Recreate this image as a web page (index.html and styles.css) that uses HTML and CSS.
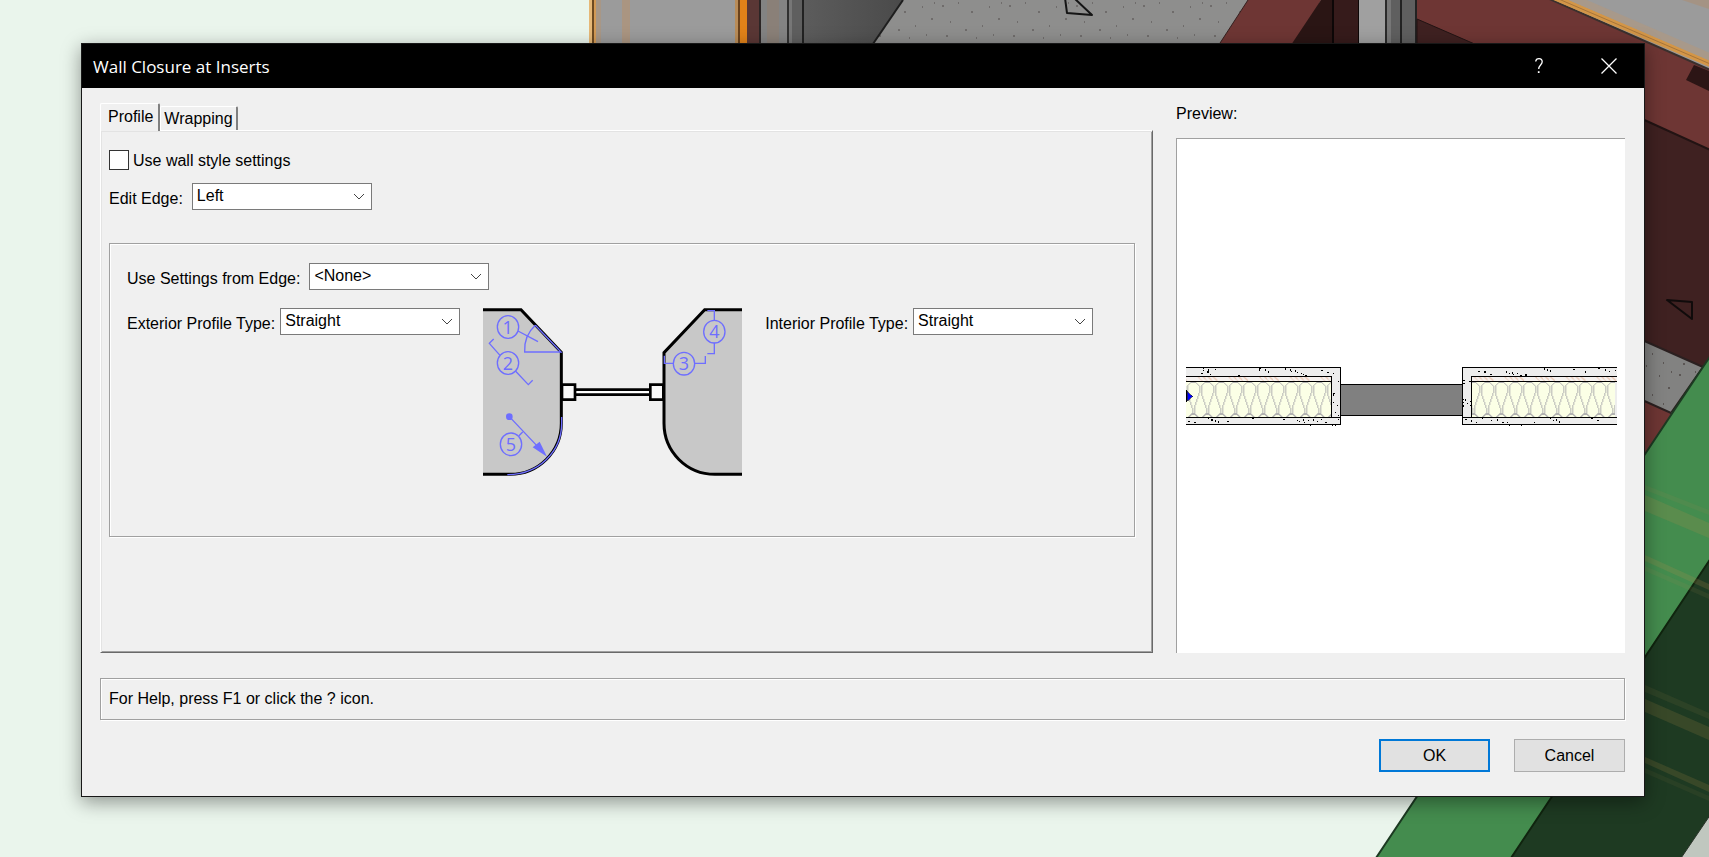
FILE: index.html
```html
<!DOCTYPE html>
<html lang="en">
<head>
<meta charset="utf-8">
<title>Wall Closure at Inserts</title>
<link rel="stylesheet" href="styles.css">
</head>
<body>
<svg class="scene" viewBox="0 0 1709 857" preserveAspectRatio="xMaxYMin slice" aria-hidden="true">
  <defs>
    <linearGradient id="soffit" x1="0" y1="0" x2="1" y2="0">
      <stop offset="0" stop-color="#5c5c5c"/><stop offset="1" stop-color="#484848"/>
    </linearGradient>
    <pattern id="grit" width="67" height="41" patternUnits="userSpaceOnUse">
      <path d="M4 6h2M20 3h1M33 12h2M51 7h1M60 19h2M12 22h1M27 30h2M44 26h1M8 36h2M55 35h1M38 38h1M63 3h1" stroke="#5b5654" stroke-width="2"/>
    </pattern>
  </defs>
  <!-- roof and walls above the dialog -->
  <rect x="589" width="1120" height="60" fill="#9b9b9b"/>
  <rect x="589" width="3" height="60" fill="#e6b877"/>
  <rect x="592" width="2" height="60" fill="#6d4a22"/>
  <rect x="594" width="2" height="60" fill="#d39a55"/>
  <rect x="596" width="5" height="60" fill="#a89786"/>
  <rect x="622" width="8" height="60" fill="#aa9581"/>
  <rect x="735" width="3" height="60" fill="#b98c58"/>
  <rect x="738" width="2" height="60" fill="#6a421c"/>
  <rect x="740" width="7" height="60" fill="#e28219"/>
  <rect x="747" width="13" height="60" fill="#5a3735"/>
  <rect x="759" width="2" height="60" fill="#2b2525"/>
  <rect x="761" width="26" height="60" fill="#838383"/>
  <rect x="767" width="12" height="60" fill="#8a8078"/>
  <rect x="787" width="2" height="60" fill="#303030"/>
  <rect x="789" width="3" height="60" fill="#777"/>
  <rect x="792" width="10" height="60" fill="#5f5f5f"/>
  <rect x="802" width="2" height="60" fill="#222"/>
  <rect x="804" width="110" height="60" fill="url(#soffit)"/>
  <path d="M903 0L862 60H1209L1248 0z" fill="#8e8e8d"/>
  <path d="M903 0L862 60H1209L1248 0z" fill="url(#grit)" opacity=".6"/>
  <path d="M903 0L862 60" stroke="#1e1e1e" stroke-width="2"/>
  <path d="M1065 -2L1067 13L1092 15L1074 -2" fill="none" stroke="#151515" stroke-width="2" stroke-linejoin="round"/>
  <path d="M1248 0L1209 60H1290L1321 0z" fill="#6e3634"/>
  <path d="M1248 0L1209 60" stroke="#35201f" stroke-width="1"/>
  <path d="M1321 0L1281 60H1333V0z" fill="#2a1514"/>
  <rect x="1332" width="2" height="60" fill="#0d0707"/>
  <rect x="1334" width="24" height="60" fill="#361b1b"/>
  <rect x="1358" width="1" height="60" fill="#0d0707"/>
  <rect x="1359" width="26" height="60" fill="#a0a0a0"/>
  <rect x="1385" width="2" height="60" fill="#2a2a2a"/>
  <rect x="1387" width="4" height="60" fill="#777"/>
  <rect x="1391" width="25" height="60" fill="#5f5f5f"/>
  <rect x="1400" width="2" height="60" fill="#222"/>
  <rect x="1415" width="2" height="60" fill="#222"/>
  <path d="M1417 0H1709V400L1640 470V60H1417z" fill="#6e3634"/>
  <path d="M1417 19L1500 55V60H1417z" fill="#3f2121" stroke="#221313"/>
  <path d="M1545 -3L1715 72V-5z" fill="#9b9b9b" stroke="#3a302d" stroke-width="2"/>
  <path d="M1554 -3L1715 66" stroke="#d39648" stroke-width="6"/>
  <path d="M1554 -3L1715 66" stroke="#a8763a" stroke-width="1"/>
  <path d="M1571 -3L1715 59" stroke="#a8998a" stroke-width="7"/>
  <path d="M1682 0L1709 9V0z" fill="#a49384"/>
  <path d="M1694 65L1686 80L1709 91V71z" fill="#2c1515"/>
  <path d="M1640 118L1715 152V380L1640 340z" fill="#3f2121" stroke="#221313" stroke-width="2"/>
  <path d="M1667 300L1692 302V319z" fill="none" stroke="#100b0b" stroke-width="2" stroke-linejoin="round"/>
  <path d="M1640 339L1703 367L1671 413L1640 399z" fill="#828281" stroke="#2b2020" stroke-width="2"/>
  <path d="M1640 339L1703 367L1671 413L1640 399z" fill="url(#grit)"/>
  <!-- lawn and hedge -->
  <path d="M1719 343L1370 867H1719z" fill="#448c4e" stroke="#1c3a22" stroke-width="2"/>
  <path d="M1719 546L1505 867H1719z" fill="#1e3a22" stroke="#10240f" stroke-width="2"/>
  <path d="M1719 802L1675 867H1719z" fill="#c0c7bf" stroke="#2a332a"/>
  <g fill="#b48a4a">
    <path d="M1645 485L1709 510V515L1645 490z" opacity=".1"/>
    <path d="M1645 495L1709 523V538L1645 511z" opacity=".2"/>
    <path d="M1645 555L1709 584V590L1645 561z" opacity=".2"/>
    <path d="M1645 566L1709 594V599L1645 571z" opacity=".1"/>
    <path d="M1645 685L1709 713V719L1645 692z" opacity=".1"/>
    <path d="M1645 699L1709 727V740L1645 712z" opacity=".18"/>
    <path d="M1645 757L1709 785V792L1645 763z" opacity=".18"/>
    <path d="M1645 768L1709 796V801L1645 773z" opacity=".08"/>
  </g>
</svg>

<main class="dialog" role="dialog" aria-labelledby="dialog-title">
  <header class="titlebar">
    <h1 class="title" id="dialog-title">Wall Closure at Inserts</h1>
    <button class="caption-button" type="button" aria-label="Help">
      <svg width="16" height="18" viewBox="0 0 16 18" fill="none" stroke="#fff" stroke-width="1.3"><path d="M4.7 4.5C4.9 2.4 6.200 1.600 8 1.600C10 1.600 11.200 2.800 11.200 4.800C11.200 7.900 7.700 8.200 7.700 12"/><path d="M7.700 14.200V16" stroke-width="1.700"/></svg>
    </button>
    <button class="caption-button" type="button" aria-label="Close">
      <svg width="16" height="18" viewBox="0 0 16 18" fill="none" stroke="#fff" stroke-width="1.300"><path d="M.5 1.500L15.500 16.500M15.500 1.500L.5 16.500"/></svg>
    </button>
  </header>

  <form class="content">
    <div class="columns">
      <section class="settings">
        <div class="tabs" role="tablist">
          <button class="tab tab-active" type="button" role="tab" aria-selected="true">Profile</button>
          <button class="tab" type="button" role="tab" aria-selected="false">Wrapping</button>
        </div>
        <div class="panel" role="tabpanel">
          <label class="check"><input class="check-box" type="checkbox">Use wall style settings</label>
          <div class="field edit-edge">
            <label class="field-label" for="edge">Edit Edge:</label>
            <span class="combo"><select class="select" id="edge"><option>Left</option></select><svg class="chevron" viewBox="0 0 12 7"><path d="M1 1l5 5l5-5"/></svg></span>
          </div>
          <div class="group">
            <div class="field">
              <label class="field-label" for="source">Use Settings from Edge:</label>
              <span class="combo"><select class="select" id="source"><option>&lt;None&gt;</option></select><svg class="chevron" viewBox="0 0 12 7"><path d="M1 1l5 5l5-5"/></svg></span>
            </div>
            <div class="profiles">
              <div class="field field-tight">
                <label class="field-label" for="exterior">Exterior Profile Type:</label>
                <span class="combo"><select class="select" id="exterior"><option>Straight</option></select><svg class="chevron" viewBox="0 0 12 7"><path d="M1 1l5 5l5-5"/></svg></span>
              </div>
              <svg class="diagram" viewBox="39 39 777 504" role="img" aria-label="Profile dimensions">
                <g fill="#c8c8c8">
                  <path d="M39 44H153L274 172V385C274 470 205 538 120 538H39z"/>
                  <path d="M816 44H704L582 173V385C582 470 650 538 735 538H816z"/>
                </g>
                <g fill="none" stroke="#000" stroke-width="9">
                  <path d="M39 44H153L274 172V385C274 470 205 538 120 538H39"/>
                  <path d="M816 44H704L582 173V385C582 470 650 538 735 538H816"/>
                  <path d="M318 284H540M318 299H540" stroke-width="8"/>
                  <path d="M318 291.500H540" stroke="#fff" stroke-width="5"/>
                  <path d="M276 269H315V314H276zM541 269H580V314H541z" fill="#fafafa" stroke-width="8"/>
                </g>
                <g fill="none" stroke="#6e6eff" stroke-width="4">
                  <path d="M196 91L273 171H164C162 137 174 111 196 91"/>
                  <ellipse cx="114" cy="96" rx="32" ry="34"/>
                  <path d="M144 108L204 140"/>
                  <path d="M71 132L58 145L90 181"/>
                  <ellipse cx="114" cy="204" rx="32" ry="34"/>
                  <path d="M137 229L175 269L188 256"/>
                  <path d="M118 365L206 458M147 422L158 411"/>
                  <ellipse cx="123" cy="448" rx="32" ry="34"/>
                  <path d="M275 366V385C275 471 205 539 112 539"/>
                  <path d="M583 182V205H610M675 205H706V183"/>
                  <ellipse cx="642" cy="206" rx="32" ry="34"/>
                  <path d="M712 47H733V77M733 143V176H712"/>
                  <ellipse cx="733" cy="110" rx="32" ry="34"/>
                </g>
                <circle cx="118" cy="365" r="10" fill="#6e6eff"/>
                <path d="M231 485L188 457L209 440z" fill="#6e6eff"/>
                <g class="diagram-number" fill="#6e6eff" text-anchor="middle">
                  <text x="113" y="116">1</text>
                  <text x="114" y="224">2</text>
                  <text x="642" y="226">3</text>
                  <text x="733" y="130">4</text>
                  <text x="123" y="468">5</text>
                </g>
              </svg>
              <div class="field field-tight">
                <label class="field-label" for="interior">Interior Profile Type:</label>
                <span class="combo"><select class="select" id="interior"><option>Straight</option></select><svg class="chevron" viewBox="0 0 12 7"><path d="M1 1l5 5l5-5"/></svg></span>
              </div>
            </div>
          </div>
        </div>
      </section>

      <section class="preview">
        <h2 class="preview-title">Preview:</h2>
        <div class="preview-view">
          <svg class="plan" viewBox="78 48 1293 180" role="img" aria-label="Wall plan" shape-rendering="crispEdges">
            <defs>
              <pattern id="batt" x="100" y="96" width="42" height="108" patternUnits="userSpaceOnUse">
                <path d="M-8 2H8M34 2H50M8 2L18 12V34L3 79V94L13 105H29L39 94V79L24 34V12L34 2M3 94L-8 105M39 94L50 105" fill="none" stroke="#b2b2b2" stroke-width="3"/>
              </pattern>
              <pattern id="brick" x="113" y="80" width="92" height="14" patternUnits="userSpaceOnUse">
                <path d="M1 0L15 14M16 0L30 14M31 0L45 14M46 0L60 14" stroke="#ecc9b6" stroke-width="3"/>
              </pattern>
            </defs>
            <g fill="#ededed">
              <path d="M78 51H543V225H78zM907 51H1371V225H907z"/>
            </g>
            <g fill="#f5f1ef"><path d="M78 80H514V94H78zM935 80H1371V94H935z"/></g>
            <g fill="url(#brick)"><path d="M78 80H514V94H78zM935 80H1371V94H935z"/></g>
            <g fill="#fbffe6"><path d="M78 96H514V202H78zM935 96H1364V202H935z"/></g>
            <g fill="url(#batt)"><path d="M78 96H514V202H78zM935 96H1364V202H935z"/></g>
            <path d="M543 102H907V198H543z" fill="#808080"/>
            <path d="M543 103.500H907M543 196.500H907M78 52.500H541.500V223.500H78M78 79.500H514.500V202.500M78 94.500H514.500M78 202.500H541.500M1371 52.500H907.500V223.500H1371M1371 79.500H934.500V202.500M1371 94.500H928M907.500 202.500H1371" fill="none" stroke="#000" stroke-width="3"/>
            <path d="M79.500 121V156" stroke="#000" stroke-width="3"/>
            <path d="M81 124L98 139.500L81 154z" fill="#00f" stroke="#223" stroke-width="2"/>
            <path d="M128 56h3M130 61h3M145 60h3M165 58h3M123 71h6M141 66h5M149 73h4M234 76h5M297 56h5M297 60h3M315 60h3M324 66h3M375 57h4M390 60h3M393 65h4M404 63h3M410 67h3M422 70h3M429 74h3M436 77h6M484 62h6M501 67h5M519 70h4M534 94h3M519 130h6M519 135h3M519 157h4M531 166h4M525 187h4M535 196h3M85 214h4M103 217h4M145 206h3M154 210h4M165 213h3M175 216h3M202 214h5M277 205h4M370 208h5M411 212h3M418 215h3M430 210h3M433 218h3M444 212h4M449 226h3M460 210h3M471 214h3M484 208h3M496 217h4M516 226h3M525 226h3M534 209h3" stroke="#000" stroke-width="4"/>
            <path transform="translate(720)" d="M234 64h5M253 66h4M270 73h5M319 66h3M328 71h3M337 69h3M340 74h3M351 70h3M361 76h4M376 75h5M433 57h3M442 60h3M451 63h3M519 58h5M555 66h3M595 55h5M615 60h4M628 64h3M645 61h4M190 91h4M190 101h4M190 148h3M195 150h3M190 158h3M202 161h3M211 155h3M211 166h3M190 168h3M196 208h4M213 213h3M229 217h3M247 206h3M274 212h3M291 210h3M305 217h6M321 218h4M328 225h3M363 226h3M401 218h3M451 206h3M460 212h3M469 210h3M478 216h3M573 206h5M592 211h4" stroke="#000" stroke-width="4"/>
          </svg>
        </div>
      </section>
    </div>

    <p class="hint">For Help, press F1 or click the ? icon.</p>

    <footer class="actions">
      <button class="button button-default" type="button">OK</button>
      <button class="button" type="button">Cancel</button>
    </footer>
  </form>
</main>
</body>
</html>
```
FILE: styles.css
```css
* {
  box-sizing: border-box;
}

body {
  margin: 0;
  min-height: 100vh;
  padding: 43px 64px 60px 81px;
  background: #eaf5ec;
  color: #000;
  font: 16px/18px "Liberation Sans", Arial, sans-serif;
  overflow: hidden;
}

button,
select,
input {
  margin: 0;
  color: inherit;
  font: inherit;
}

.scene {
  position: absolute;
  inset: 0;
  width: 100%;
  height: 100%;
}

.dialog {
  position: relative;
  border: 1px solid #181818;
  background: #f0f0f0;
  box-shadow: 0 5px 18px rgba(0, 0, 0, .4);
}

.titlebar {
  display: flex;
  height: 44px;
  padding-left: 11px;
  background: #000;
  color: #fff;
}

.title {
  flex: 1;
  margin: 0;
  font: 400 17px/46px "Open Sans", "Noto Sans", sans-serif;
}

.caption-button {
  display: grid;
  place-items: center;
  width: 70px;
  padding: 0;
  border: 0;
  background: none;
}

.content {
  padding: 15px 19px 24px 18px;
}

.columns {
  display: grid;
  grid-template-columns: 1053fr 449fr;
  gap: 23px;
}

.settings {
  display: flex;
  flex-direction: column;
}

.tabs {
  display: flex;
  align-items: flex-end;
}

.tab {
  height: 24px;
  padding: 0 3px;
  border: 1px solid #fff;
  border-right: 2px solid #808080;
  border-bottom: 0;
  border-radius: 2px 2px 0 0;
  background: #f0f0f0;
}

.tab-active {
  position: relative;
  z-index: 1;
  height: 28px;
  margin-bottom: -1px;
  padding: 0 5px 2px 7px;
}

.panel {
  flex: 1;
  min-height: 523px;
  padding: 19px 17px 19px 8px;
  border: 1px solid;
  border-color: #fff #696969 #696969 #fff;
  box-shadow: inset 1px 1px #e3e3e3, inset -1px -1px #a0a0a0;
}

.check {
  display: flex;
  gap: 4px;
  width: max-content;
  line-height: 22px;
}

.check-box {
  appearance: none;
  width: 20px;
  height: 20px;
  border: 1px solid #333;
  background: #fff;
}

.field {
  display: flex;
  gap: 9px;
}

.field-tight {
  gap: 5px;
}

.field-label {
  padding-top: 7px;
}

.edit-edge {
  margin-top: 11px;
}

.combo {
  position: relative;
  width: 180px;
}

.select {
  display: block;
  appearance: none;
  width: 100%;
  height: 27px;
  padding: 0 28px 2px 4px;
  border: 1px solid #7a7a7a;
  border-radius: 0;
  background: #fff;
}

.chevron {
  position: absolute;
  top: 10px;
  right: 7px;
  width: 12px;
  height: 7px;
  fill: none;
  stroke: #444;
  pointer-events: none;
}

.group {
  display: grid;
  gap: 18px;
  margin-top: 33px;
  padding: 19px 17px 60px;
  border: 1px solid #a0a0a0;
  box-shadow: inset 1px 1px #fff, 1px 1px #fff;
}

.profiles {
  display: flex;
  align-items: flex-start;
  gap: 23px;
}

.diagram {
  width: 259px;
  height: 168px;
}

.diagram-number {
  font: 54px "Open Sans", "Noto Sans", sans-serif;
}

.preview {
  display: flex;
  flex-direction: column;
  gap: 15px;
}

.preview-title {
  margin: 0;
  padding-top: 2px;
  font: inherit;
}

.preview-view {
  display: flex;
  flex: 1;
  align-items: center;
  padding: 0 8px 0 9px;
  border-top: 1px solid #a0a0a0;
  border-left: 1px solid #a0a0a0;
  background: #fff;
}

.plan {
  width: 100%;
}

.hint {
  margin: 25px 0 19px;
  padding: 11px 8px;
  border: 1px solid #a0a0a0;
  box-shadow: inset 1px 1px #fff, 1px 1px #fff;
}

.actions {
  display: flex;
  justify-content: flex-end;
  gap: 24px;
}

.button {
  width: 111px;
  height: 33px;
  padding: 0;
  border: 1px solid #adadad;
  background: #e1e1e1;
}

.button-default {
  border: 2px solid #0078d7;
}
```
